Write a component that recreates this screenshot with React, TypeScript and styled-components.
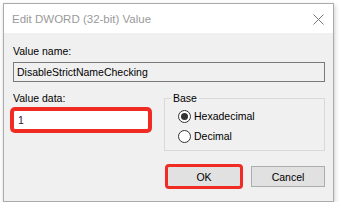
import styled, { createGlobalStyle } from "styled-components";

const GlobalStyle = createGlobalStyle`
  html, body {
    margin: 0;
    padding: 0;
    background: #fff;
  }
  body {
    font-family: "Liberation Sans", Arial, sans-serif;
    font-size: 10.5px;
    color: #000;
  }
  * {
    box-sizing: border-box;
  }
`;

const App = () => {
  return (
    <>
      <GlobalStyle />
      <Page>
        <Window>
          <TitleBar>
            <Title>Edit DWORD (32-bit) Value</Title>
            <Close width="11" height="11" viewBox="0 0 11 11">
              <path d="M0.5 0.5 L10.5 10.5 M10.5 0.5 L0.5 10.5" stroke="#777" strokeWidth="1" fill="none" />
            </Close>
          </TitleBar>
          <Body>
            <Label>Value name:</Label>
            <NameBox>DisableStrictNameChecking</NameBox>
            <Middle>
              <DataCol>
                <Label>Value data:</Label>
                <DataBox>1</DataBox>
              </DataCol>
              <Group>
                <Legend>Base</Legend>
                <Radio>
                  <Circle $checked />
                  <span>Hexadecimal</span>
                </Radio>
                <Radio>
                  <Circle />
                  <span>Decimal</span>
                </Radio>
              </Group>
            </Middle>
            <Buttons>
              <Button $marked>OK</Button>
              <Button>Cancel</Button>
            </Buttons>
          </Body>
        </Window>
      </Page>
    </>
  );
};

const Page = styled.div`
  padding: 3px 0 0 3px;
`;
const Window = styled.div`
  width: 331px;
  height: 199px;
  border: 1px solid #aaaaaa;
  display: flex;
  flex-direction: column;
  box-shadow: 1px 2px 5px rgba(0, 0, 0, 0.2);
`;
const TitleBar = styled.div`
  height: 29px;
  background: #fff;
  display: flex;
  align-items: center;
  justify-content: space-between;
  padding: 0 9px 0 8px;
`;
const Title = styled.span`
  font-size: 11.5px;
  color: #9a9a9a;
`;
const Close = styled.svg`
  display: block;
  margin-top: 1px;
`;
const Body = styled.div`
  flex: 1;
  background: #f0f0f0;
  padding: 12px 8px 0 9px;
  display: flex;
  flex-direction: column;
`;
const Label = styled.div`
  line-height: 13px;
  height: 13px;
`;
const NameBox = styled.div`
  margin-top: 4px;
  height: 20px;
  border: 1px solid #7a7a7a;
  background: #f0f0f0;
  padding-left: 3px;
  line-height: 18px;
  white-space: nowrap;
`;
const Middle = styled.div`
  margin-top: 10px;
  display: flex;
  align-items: flex-start;
`;
const DataCol = styled.div`
  flex: 1;
  display: flex;
  flex-direction: column;
`;
const DataBox = styled.div`
  margin-top: 5px;
  width: 136px;
  height: 20px;
  background: #fff;
  border: 1px solid #ef2b24;
  border-radius: 2px;
  box-shadow: 0 0 0 3px #ef2b24;
  padding-left: 4px;
  line-height: 18px;
  color: #3a0b3e;
`;
const Group = styled.fieldset`
  width: 161px;
  margin: 0;
  padding: 1px 0 4px 13px;
  border: 1px solid #d9d9d9;
  min-inline-size: 0;
`;
const Legend = styled.legend`
  margin-left: -7px;
  padding: 0 2px;
  line-height: 13px;
`;
const Radio = styled.div`
  height: 20px;
  display: flex;
  align-items: center;
  gap: 3px;
`;
const Circle = styled.span<{ $checked?: boolean }>`
  width: 13px;
  height: 13px;
  border-radius: 50%;
  border: 1px solid #333;
  background: #fff;
  display: flex;
  align-items: center;
  justify-content: center;
  &::after {
    content: "";
    width: 7px;
    height: 7px;
    border-radius: 50%;
    background: ${(p) => (p.$checked ? "#333" : "transparent")};
  }
`;
const Buttons = styled.div`
  margin-top: 15px;
  display: flex;
  justify-content: flex-end;
  gap: 10px;
`;
const Button = styled.div<{ $marked?: boolean }>`
  width: 74px;
  height: 21px;
  background: #e1e1e1;
  border: 1px solid ${(p) => (p.$marked ? "#ef2b24" : "#adadad")};
  border-radius: ${(p) => (p.$marked ? "2px" : "0")};
  box-shadow: ${(p) => (p.$marked ? "0 0 0 2px #ef2b24" : "none")};
  display: flex;
  align-items: center;
  justify-content: center;
`;

export default App;
